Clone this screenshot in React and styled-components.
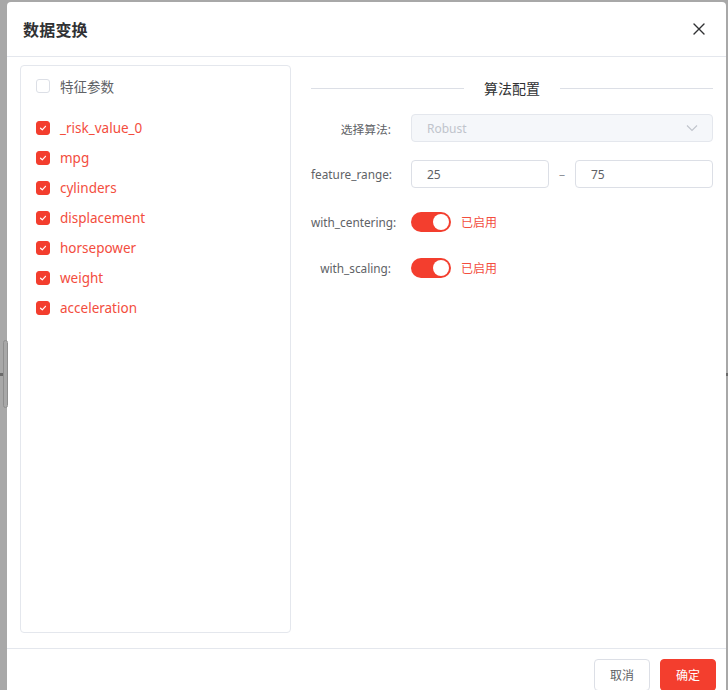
import React from "react";
import styled, { createGlobalStyle } from "styled-components";

const Global = createGlobalStyle`
  html, body { margin: 0; padding: 0; }
  body {
    background: #a8a8a8;
    font-family: "Noto Sans", "Noto Sans CJK SC", sans-serif;
    overflow: hidden;
  }
  * { box-sizing: border-box; }
`;

const RED = "#f33e2e";
const RED_TEXT = "#f34d3e";

const Backdrop = styled.div`
  position: relative;
  width: 728px;
  height: 690px;
  padding: 2px 0 0 7px;
  overflow: hidden;
`;

const BehindHandle = styled.div`
  position: absolute;
  left: 3px;
  top: 340px;
  width: 5px;
  height: 68px;
  border: 1px solid #8e8e8e;
  border-radius: 3px;
`;

const BehindMark = styled.div`
  position: absolute;
  top: 373px;
  left: ${(p) => p.$left}px;
  width: 3px;
  height: 3px;
  background: #6a6a6a;
`;

const Modal = styled.div`
  width: 719px;
  height: 700px;
  background: #fff;
  border-radius: 4px 4px 0 0;
  display: flex;
  flex-direction: column;
`;

const Header = styled.div`
  height: 55px;
  padding: 0 16px;
  display: flex;
  align-items: center;
  justify-content: space-between;
  border-bottom: 1px solid #e4e7ed;
`;

const Title = styled.h2`
  margin: 0;
  font-size: 16px;
  font-weight: 700;
  color: #303133;
  letter-spacing: 0.2px;
`;

const CloseBtn = styled.button`
  border: none;
  background: none;
  padding: 0;
  width: 14px;
  height: 14px;
  margin-right: 4px;
  display: flex;
  align-items: center;
  justify-content: center;
  cursor: pointer;
`;

const Body = styled.div`
  display: flex;
  gap: 20px;
  padding: 8px 13px 15px 13px;
  height: 591px;
`;

const ListPanel = styled.div`
  width: 271px;
  border: 1px solid #e4e7ed;
  border-radius: 4px;
  padding: 5px 15px;
  display: flex;
  flex-direction: column;
`;

const CheckRow = styled.label`
  display: flex;
  align-items: center;
  height: 30px;
  gap: 10px;
  font-size: 13.5px;
  color: ${(p) => (p.$checked ? RED_TEXT : "#606266")};
  cursor: pointer;
`;

const AllRow = styled(CheckRow)`
  margin-bottom: 12px;
`;

const Box = styled.span`
  width: 14px;
  height: 14px;
  border-radius: 3px;
  flex: none;
  display: flex;
  align-items: center;
  justify-content: center;
  background: ${(p) => (p.$checked ? RED : "#fff")};
  border: 1px solid ${(p) => (p.$checked ? RED : "#dcdfe6")};
`;

const Config = styled.div`
  flex: 1;
  display: flex;
  flex-direction: column;
`;

const SectionDivider = styled.div`
  display: flex;
  align-items: center;
  gap: 20px;
  margin: 13px 0 16px;
  font-size: 14px;
  color: #303133;
  &::before,
  &::after {
    content: "";
    flex: 1;
    height: 1px;
    background: #dcdfe6;
  }
`;

const FormRow = styled.div`
  display: flex;
  align-items: center;
  height: ${(p) => p.$h || 28}px;
  margin-bottom: ${(p) => p.$mb ?? 18}px;
`;

const Label = styled.div`
  width: 100px;
  padding-right: 20px;
  flex: none;
  font-size: 11.8px;
  color: #606266;
  text-align: right;
  white-space: nowrap;
`;

const Control = styled.div`
  flex: 1;
  display: flex;
  align-items: center;
  height: 100%;
`;

const Select = styled.div`
  flex: 1;
  height: 28px;
  border: 1px solid #e4e7ed;
  background: #f5f7fa;
  border-radius: 4px;
  padding: 0 14px 0 15px;
  display: flex;
  align-items: center;
  justify-content: space-between;
  font-size: 12px;
  color: #c0c4cc;
`;

const Input = styled.div`
  flex: 1;
  height: 28px;
  border: 1px solid #dcdfe6;
  border-radius: 4px;
  padding: 0 15px;
  display: flex;
  align-items: center;
  font-size: 12px;
  color: #606266;
`;

const Dash = styled.span`
  width: 26px;
  text-align: center;
  font-size: 12px;
  color: #909399;
`;

const Switch = styled.span`
  width: 40px;
  height: 20px;
  border-radius: 10px;
  background: ${RED};
  position: relative;
  flex: none;
  &::after {
    content: "";
    position: absolute;
    top: 2px;
    right: 2px;
    width: 16px;
    height: 16px;
    border-radius: 50%;
    background: #fff;
  }
`;

const SwitchText = styled.span`
  margin-left: 10px;
  font-size: 12px;
  color: ${RED_TEXT};
`;

const Footer = styled.div`
  border-top: 1px solid #e4e7ed;
  padding: 10px 10px 0 0;
  display: flex;
  justify-content: flex-end;
  gap: 10px;
`;

const Button = styled.button`
  width: 56px;
  height: 32px;
  border-radius: 4px;
  font-family: inherit;
  font-size: 12px;
  cursor: pointer;
  border: 1px solid ${(p) => (p.$primary ? RED : "#dcdfe6")};
  background: ${(p) => (p.$primary ? RED : "#fff")};
  color: ${(p) => (p.$primary ? "#fff" : "#606266")};
`;

const Tick = () => (
  <svg width="8" height="8" viewBox="0 0 8 8">
    <path d="M1.5 4.2 L3.3 5.8 L6.5 2.3" fill="none" stroke="#fff" strokeWidth="1.2" strokeLinecap="round" strokeLinejoin="round" />
  </svg>
);

const features = ["_risk_value_0", "mpg", "cylinders", "displacement", "horsepower", "weight", "acceleration"];

export default function App() {
  return (
    <>
      <Global />
      <Backdrop>
        <BehindHandle />
        <BehindMark $left={0} />
        <BehindMark $left={726} />
        <Modal>
          <Header>
            <Title>数据变换</Title>
            <CloseBtn aria-label="close">
              <svg width="12" height="12" viewBox="0 0 12 12">
                <path d="M1 1 L11 11 M11 1 L1 11" stroke="#303133" strokeWidth="1.4" strokeLinecap="round" />
              </svg>
            </CloseBtn>
          </Header>
          <Body>
            <ListPanel>
              <AllRow>
                <Box />
                特征参数
              </AllRow>
              {features.map((f) => (
                <CheckRow key={f} $checked>
                  <Box $checked>
                    <Tick />
                  </Box>
                  {f}
                </CheckRow>
              ))}
            </ListPanel>
            <Config>
              <SectionDivider>算法配置</SectionDivider>
              <FormRow>
                <Label>选择算法:</Label>
                <Control>
                  <Select>
                    Robust
                    <svg width="12" height="8" viewBox="0 0 12 8">
                      <path d="M1 1.5 L6 6.5 L11 1.5" fill="none" stroke="#c0c4cc" strokeWidth="1.1" />
                    </svg>
                  </Select>
                </Control>
              </FormRow>
              <FormRow>
                <Label>feature_range:</Label>
                <Control>
                  <Input>25</Input>
                  <Dash>–</Dash>
                  <Input>75</Input>
                </Control>
              </FormRow>
              <FormRow $h={32} $mb={14}>
                <Label>with_centering:</Label>
                <Control>
                  <Switch />
                  <SwitchText>已启用</SwitchText>
                </Control>
              </FormRow>
              <FormRow $h={32} $mb={0}>
                <Label>with_scaling:</Label>
                <Control>
                  <Switch />
                  <SwitchText>已启用</SwitchText>
                </Control>
              </FormRow>
            </Config>
          </Body>
          <Footer>
            <Button>取消</Button>
            <Button $primary>确定</Button>
          </Footer>
        </Modal>
      </Backdrop>
    </>
  );
}
